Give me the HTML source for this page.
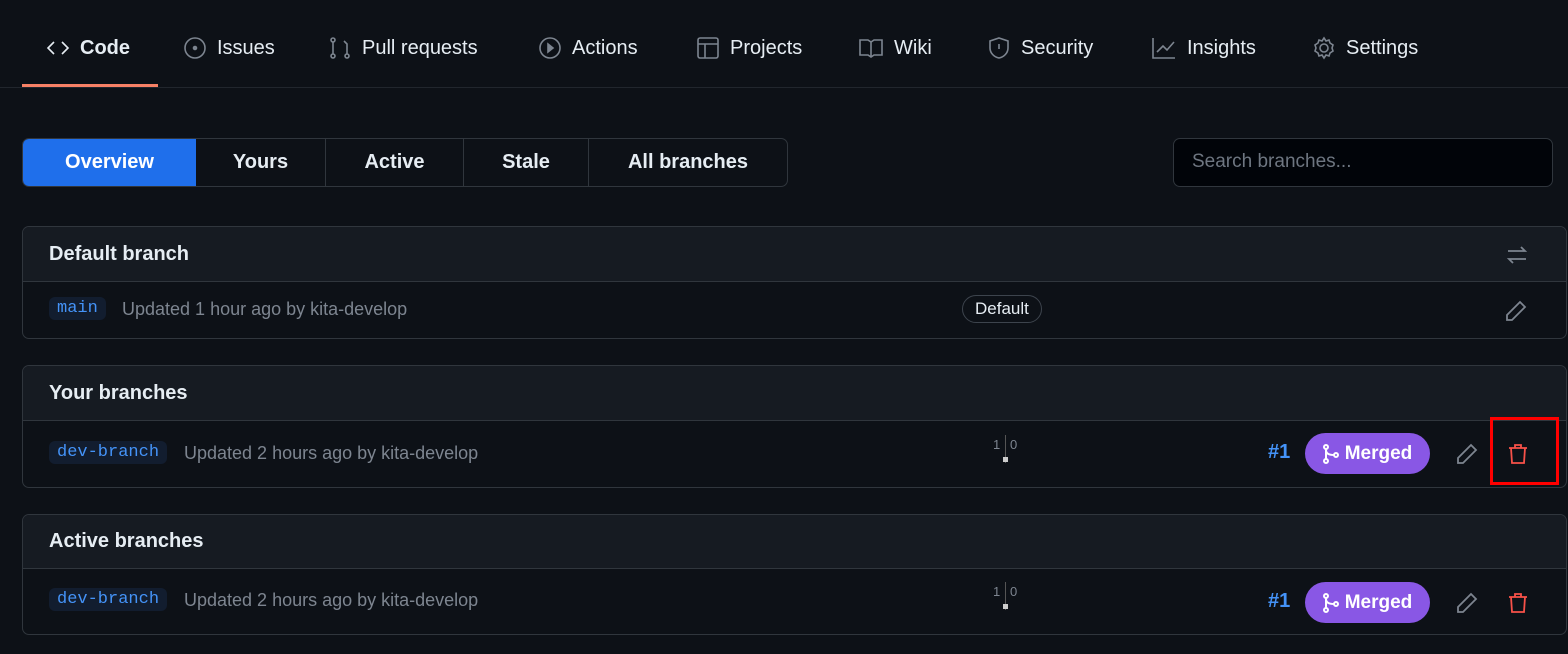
<!DOCTYPE html>
<html><head><style>
*{box-sizing:border-box;margin:0;padding:0}
body{width:1568px;height:654px;background:#0d1117;font-family:"Liberation Sans",sans-serif;color:#e6edf3;position:relative;overflow:hidden}
.a{position:absolute}
.nav{font-size:20px;color:#e6edf3;display:flex;align-items:center;gap:10px;top:36px}
.nav svg{stroke:#7d8590;fill:none;stroke-width:1.6}
.seg{left:22px;top:138px;width:766px;height:49px;border:1px solid #30363d;border-radius:7px;display:flex;overflow:hidden;font-weight:bold;font-size:20px}
.seg div{display:flex;align-items:center;justify-content:center;border-right:1px solid #30363d}
.box{left:22px;width:1545px;border:1px solid #30363d;border-radius:7px;overflow:hidden}
.hd{background:#161b22;border-bottom:1px solid #30363d;font-weight:bold;font-size:20px;padding-left:26px;display:flex;align-items:center}
.row{position:relative;font-size:18px;color:#7d8590}
.br{position:absolute;left:26px;background:#121d2f;color:#4493f8;font-family:"Liberation Mono",monospace;font-size:17px;padding:2px 8px;border-radius:6px}
.merged{position:absolute;background:#8957e5;color:#fff;font-weight:bold;font-size:19px;border-radius:22px;width:125px;height:41px;display:flex;align-items:center;justify-content:center;gap:6px}
.num{position:absolute;color:#4493f8;font-size:20px;font-weight:bold}
</style></head><body>
<div class="a nav" style="left:46px"><svg width="24" height="24" viewBox="0 0 24 24" style="stroke:#e6edf3"><path d="M8 6l-6 6 6 6M16 6l6 6-6 6"/></svg><b>Code</b></div>
<div class="a" style="left:22px;top:84px;width:136px;height:3px;background:#f78166"></div>
<div class="a" style="left:0;top:87px;width:1568px;height:1px;background:#21262d"></div>
<div class="a nav" style="left:183px"><svg width="24" height="24" viewBox="0 0 24 24"><circle cx="12" cy="12" r="10"/><circle cx="12" cy="12" r="1.5" fill="#7d8590"/></svg>Issues</div>
<div class="a nav" style="left:328px"><svg width="24" height="24" viewBox="0 0 24 24"><circle cx="5" cy="4" r="2"/><circle cx="5" cy="20" r="2"/><circle cx="19" cy="20" r="2"/><path d="M5 6v12M19 18V8l-3-3"/></svg>Pull requests</div>
<div class="a nav" style="left:538px"><svg width="24" height="24" viewBox="0 0 24 24"><circle cx="12" cy="12" r="10"/><path d="M10 8l5 4-5 4z" fill="#7d8590"/></svg>Actions</div>
<div class="a nav" style="left:696px"><svg width="24" height="24" viewBox="0 0 24 24"><rect x="2" y="2" width="20" height="20" rx="2"/><path d="M2 8h20M9 8v14"/></svg>Projects</div>
<div class="a nav" style="left:858px"><svg width="26" height="24" viewBox="0 0 26 24"><path d="M2 4h8l3 2 3-2h8v15h-8l-3 2-3-2H2zM13 6v15"/></svg>Wiki</div>
<div class="a nav" style="left:987px"><svg width="24" height="24" viewBox="0 0 24 24"><path d="M12 2l9 3v7c0 5-4 9-9 10-5-1-9-5-9-10V5z"/><path d="M12 8v5"/></svg>Security</div>
<div class="a nav" style="left:1151px"><svg width="26" height="24" viewBox="0 0 26 24"><path d="M2 2v20h22M6 16l6-6 4 4 7-8"/></svg>Insights</div>
<div class="a nav" style="left:1312px"><svg width="24" height="24" viewBox="0 0 24 24"><circle cx="12" cy="12" r="4"/><path d="M12 2l2 3 3-1 1 3 3 2-1 3 1 3-3 2-1 3-3-1-2 3-2-3-3 1-1-3-3-2 1-3-1-3 3-2 1-3 3 1z"/></svg>Settings</div>

<div class="a seg">
<div style="width:173px;background:#1f6feb;color:#fff;border-right:none">Overview</div>
<div style="width:130px">Yours</div>
<div style="width:138px">Active</div>
<div style="width:125px">Stale</div>
<div style="flex:1;border-right:none">All branches</div>
</div>
<div class="a" style="left:1173px;top:138px;width:380px;height:49px;border:1px solid #30363d;border-radius:7px;background:#010409;color:#6e7681;font-size:19px;padding:12px 18px">Search branches...</div>

<div class="a box" style="top:226px;height:113px">
<div class="hd" style="height:55px">Default branch</div>
<svg class="a" style="right:38px;top:18px" width="22" height="20" viewBox="0 0 22 20" fill="none" stroke="#7d8590" stroke-width="1.8"><path d="M2 6h17l-4-4M20 14H3l4 4"/></svg>
<div class="row" style="height:57px"><span class="br" style="top:15px">main</span><span class="a" style="left:99px;top:17px">Updated 1 hour ago by kita-develop</span>
<span class="a" style="left:939px;top:13px;border:1px solid #3d444d;border-radius:16px;padding:3px 12px;font-size:17px;color:#e6edf3">Default</span>
<svg class="a" style="left:1482px;top:18px" width="22" height="22" viewBox="0 0 22 22" fill="none" stroke="#7d8590" stroke-width="1.8"><path d="M15 2l5 5L7 20H2v-5z"/></svg></div>
</div>

<div class="a box" style="top:365px;height:123px">
<div class="hd" style="height:55px">Your branches</div>
<div class="row" style="height:66px"><span class="br" style="top:20px">dev-branch</span><span class="a" style="left:161px;top:22px">Updated 2 hours ago by kita-develop</span>
<span class="a" style="left:970px;top:16px;font-size:13px">1</span><span class="a" style="left:982px;top:14px;width:1px;height:28px;background:#555"></span><span class="a" style="left:987px;top:16px;font-size:13px">0</span><span class="a" style="left:980px;top:36px;width:5px;height:5px;background:#ccc"></span>
<span class="num" style="left:1245px;top:20px">#1</span>
<div class="merged" style="left:1282px;top:12px"><svg width="16" height="20" viewBox="0 0 16 20" fill="none" stroke="#fff" stroke-width="2"><circle cx="3" cy="3" r="2"/><circle cx="3" cy="17" r="2"/><circle cx="13" cy="11" r="2"/><path d="M3 5v10M3 6c0 4 4 5 8 5"/></svg>Merged</div>
<svg class="a" style="left:1433px;top:22px" width="22" height="22" viewBox="0 0 22 22" fill="none" stroke="#7d8590" stroke-width="1.8"><path d="M15 2l5 5L7 20H2v-5z"/></svg>
<svg class="a" style="left:1484px;top:22px" width="22" height="22" viewBox="0 0 22 22" fill="none" stroke="#f85149" stroke-width="1.8"><path d="M2 5h18M8 5V2h6v3M4 5l1 15h12l1-15"/></svg></div>
</div>
<div class="a" style="left:1490px;top:417px;width:69px;height:68px;border:3px solid #ff0000"></div>

<div class="a box" style="top:514px;height:121px">
<div class="hd" style="height:54px">Active branches</div>
<div class="row" style="height:66px"><span class="br" style="top:19px">dev-branch</span><span class="a" style="left:161px;top:21px">Updated 2 hours ago by kita-develop</span>
<span class="a" style="left:970px;top:15px;font-size:13px">1</span><span class="a" style="left:982px;top:13px;width:1px;height:28px;background:#555"></span><span class="a" style="left:987px;top:15px;font-size:13px">0</span><span class="a" style="left:980px;top:35px;width:5px;height:5px;background:#ccc"></span>
<span class="num" style="left:1245px;top:21px">#1</span>
<div class="merged" style="left:1282px;top:13px"><svg width="16" height="20" viewBox="0 0 16 20" fill="none" stroke="#fff" stroke-width="2"><circle cx="3" cy="3" r="2"/><circle cx="3" cy="17" r="2"/><circle cx="13" cy="11" r="2"/><path d="M3 5v10M3 6c0 4 4 5 8 5"/></svg>Merged</div>
<svg class="a" style="left:1433px;top:23px" width="22" height="22" viewBox="0 0 22 22" fill="none" stroke="#7d8590" stroke-width="1.8"><path d="M15 2l5 5L7 20H2v-5z"/></svg>
<svg class="a" style="left:1484px;top:23px" width="22" height="22" viewBox="0 0 22 22" fill="none" stroke="#f85149" stroke-width="1.8"><path d="M2 5h18M8 5V2h6v3M4 5l1 15h12l1-15"/></svg></div>
</div>
</body></html>
